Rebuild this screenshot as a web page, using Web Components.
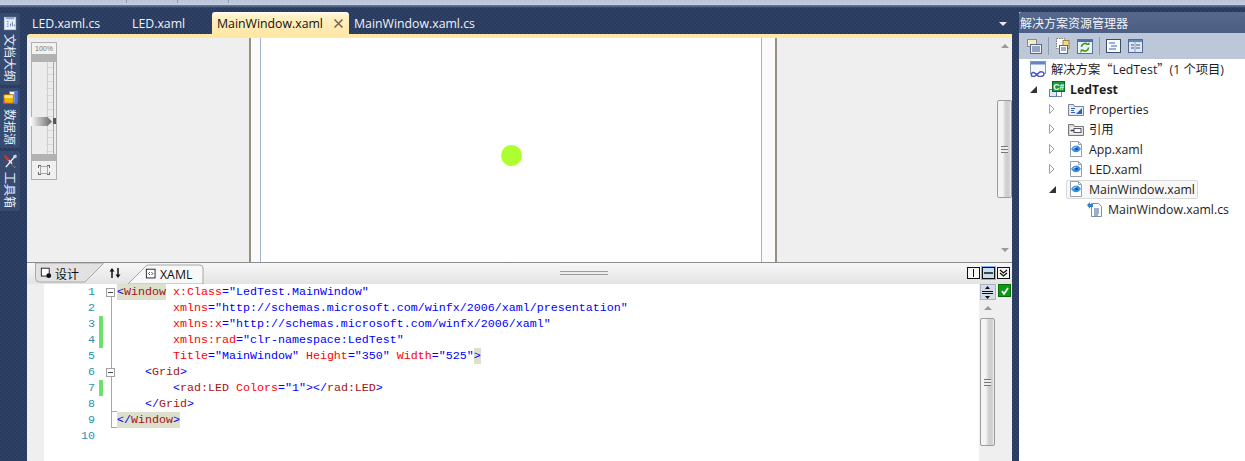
<!DOCTYPE html>
<html>

<head>
    <meta charset="utf-8">
    <style>
        html, body { margin: 0; height: 461px; overflow: hidden; background: #2b3c5c; }
    </style>
</head>

<body>

    <vs-shell>
        <vs-side-tab slot="side" icon="outline" style="height:72px">文档大纲</vs-side-tab>
        <vs-side-tab slot="side" icon="data" style="height:60px">数据源</vs-side-tab>
        <vs-side-tab slot="side" icon="tools" style="height:60px">工具箱</vs-side-tab>

        <vs-tab slot="tabs" style="width:100px">LED.xaml.cs</vs-tab>
        <vs-tab slot="tabs" style="width:85px">LED.xaml</vs-tab>
        <vs-tab slot="tabs" active style="width:137px">MainWindow.xaml</vs-tab>
        <vs-tab slot="tabs">MainWindow.xaml.cs</vs-tab>

        <vs-designer slot="designer"></vs-designer>
        <vs-split-bar slot="split"></vs-split-bar>
        <vs-code slot="code"></vs-code>
        <vs-explorer slot="explorer"></vs-explorer>
    </vs-shell>

    <script>
        const UI_FONT = '"Open Sans", "Noto Sans CJK SC", sans-serif';

        // 所有小图标都放在这里，viewBox 都是 16x16
        const ICONS = {
            outline: '<rect x="1.5" y="1.5" width="12" height="13" fill="#eef2f8" stroke="#c5d0e4"/><rect x="3" y="1" width="9" height="2.5" fill="#8fa6cf"/><path d="M4 6h2M4 8.5h2M4 11h2M8 11V8M10 11V6M12 11V9" stroke="#5d7fb8"/>',
            data: '<rect x="7" y="0.5" width="8" height="12" fill="#f4f6fb" stroke="#6a86d8"/><rect x="12" y="1" width="3" height="13" fill="#4f74e0"/><rect x="1" y="4" width="10" height="9" fill="#f4b400" stroke="#a87400"/><rect x="1.5" y="4.5" width="9" height="3" fill="#ffe680"/><rect x="0" y="11" width="2" height="2" fill="#e040c0"/>',
            tools: '<path d="M2 2l11 12" stroke="#d8dde8" stroke-width="1.6"/><path d="M1.5 1.5l5 5" stroke="#d02020" stroke-width="2"/><path d="M14 1L3 14" stroke="#e8ecf4" stroke-width="1.6"/><path d="M11 1.5c2-1 4 .5 3.5 2.5l-2.5.5-1-1z" fill="#c8d0dc"/><path d="M9 11l3 3 2-1-3-4z" fill="#4a4a4a"/>',
            design: '<rect x="1.500" y="2.500" width="9" height="9" fill="#fff" stroke="#111"/><circle cx="10" cy="11" r="2.800" fill="#111"/>',
            xaml: '<rect x="1.500" y="2.500" width="10" height="10" fill="#fff" stroke="#111"/><path d="M5.500 6L4 7.500 5.500 9M7.500 6L9 7.500 7.500 9" fill="none" stroke="#111"/>',
            solution: '<rect x="0.5" y="0.5" width="15" height="12" fill="#f6f8fc" stroke="#8a97ad"/><rect x="1" y="1" width="14" height="2.500" fill="#5f86c8"/><path d="M3 15.500c-2 0-2.500-3.500 0-4s4 4 6.500 4 4.500-1 4.500-2.500-2-3-4-2-3.500 4.500-7 4.500z" fill="#fff" stroke="#4a58c8" stroke-width="1.500"/>',
            project: '<rect x="3.500" y="6.500" width="9" height="9" fill="#fff" stroke="#7a8aa8"/><rect x="0.500" y="8.500" width="7" height="7" fill="#dfe8f6" stroke="#6080b0"/><rect x="3.500" y="0.500" width="12" height="10" fill="#1f9a3a" stroke="#0e6a22"/><text x="4.300" y="8.800" font-size="8.500" font-weight="700" font-family="Liberation Sans" fill="#fff">C#</text>',
            props: '<path d="M0.500 3.500h5l1 2h9v9H0.500z" fill="#dde3ee" stroke="#7a8598"/><rect x="2" y="6" width="12.500" height="7.500" fill="#eef2f9"/><path d="M3 7.500h4M3 9.500h3M3 11.500h4" stroke="#3060c0"/><path d="M8 13l6-6v6z" fill="#2a5fd0"/>',
            refs: '<path d="M0.500 3.500h5l1 2h9v9H0.500z" fill="#d8d8d8" stroke="#777"/><rect x="2" y="6" width="12.500" height="7.500" fill="#efefef"/><rect x="6" y="7.500" width="7" height="4" fill="#fff" stroke="#556"/><path d="M2.500 9.500H6" stroke="#445" stroke-width="1.500"/>',
            xamlfile: '<path d="M2.500 0.500h8l3 3v12h-11z" fill="#fff" stroke="#96a0ae"/><path d="M10.500 0.500v3h3" fill="none" stroke="#96a0ae"/><path d="M3 8c1.500-2.500 3.500-3.500 5.500-3.500S11.500 6 13 8c-1.500 2-3 3.300-5 3.300S4.500 10 3 8z" fill="#3b8ee0"/><path d="M5 8c.8-1.300 2-2 3.300-2" stroke="#cfe6ff" fill="none"/><circle cx="8.500" cy="8" r="1.300" fill="#0f4f9e"/>',
            csfile: '<path d="M4.500 2.500h7l3 3v10h-10z" fill="#fff" stroke="#7f8da3"/><path d="M7 8h5M7 10h5M7 12h5M7 14h4" stroke="#3b5f95"/><path d="M0 4l3-3v2h3v3H3v2z" fill="#2f7fd8"/>',
            tbProps: '<rect x="1.500" y="1.500" width="9" height="7" fill="#f4ecc8" stroke="#8f8a70"/><rect x="4.500" y="6.500" width="11" height="9" fill="#eef2f8" stroke="#54688c"/><path d="M6 9h8M6 11h8M6 13h8" stroke="#3b5688"/>',
            tbFiles: '<rect x="1.500" y="0.500" width="8" height="10" fill="#fff" stroke="#777" stroke-dasharray="1.500 1"/><rect x="8" y="2.500" width="6" height="8" fill="#f0d890" stroke="#9a8545"/><rect x="4.500" y="7.500" width="8" height="8" fill="#f7f9fc" stroke="#4d6a9c"/><path d="M6 10h5M6 12h5" stroke="#4d6a9c"/>',
            tbRefresh: '<rect x="0.500" y="1.500" width="15" height="14" fill="#eef3fa" stroke="#5a7198"/><rect x="1" y="2" width="14" height="2" fill="#4f6fa8"/><path d="M4.500 9a3.500 3.500 0 0 1 6-2.500M11.500 9.500a3.500 3.500 0 0 1-6 2.500" fill="none" stroke="#3f9a1e" stroke-width="1.600"/><path d="M9 7h3.500V4zM7 11.500H3.500V15z" fill="#3f9a1e"/>',
            tbCode: '<rect x="0.500" y="1.500" width="14" height="13" fill="#fbfcfe" stroke="#3d4c68"/><path d="M3 5h6M5 8h6M3 11h7" stroke="#2c63c8" stroke-width="1.200"/>',
            tbView: '<rect x="0.500" y="1.500" width="14" height="13" fill="#dfe7f3" stroke="#4f6a98"/><rect x="1" y="2" width="13" height="2" fill="#5f86c8"/><path d="M3 7h3M3 10h3M8 7h4M8 10h4" stroke="#455a80"/><path d="M7 4v10" stroke="#8a9cba"/>'
        };

        // 通用的 shadow 模板写法
        function shadowOf(el, html) {
            const shadow = el.attachShadow({ mode: 'open' });
            shadow.innerHTML = html;
            return shadow;
        }

        class VsIcon extends HTMLElement {
            constructor() {
                super();
                const size = this.getAttribute('size') || 16;
                shadowOf(this, `<style>:host{display:inline-flex;flex:none;width:${size}px;height:${size}px}svg{display:block}</style>
                    <svg width="${size}" height="${size}" viewBox="0 0 16 16">${ICONS[this.getAttribute('name')] || ''}</svg>`);
            }
        }

        class VsShell extends HTMLElement {
            constructor() {
                super();
                shadowOf(this, `<style>
                    :host { display: flex; flex-direction: column; width: 1245px; height: 461px; overflow: hidden;
                        background: repeating-conic-gradient(#2e4168 0 25%, #293a5a 0 50%) 0 0/4px 4px; font-family: ${UI_FONT}; }
                    .top { height: 5px; flex: none; background: linear-gradient(#b9c5da, #c3cde0); display: flex; }
                    .top i { width: 50px; height: 3px; border-right: 1px solid #8e9ab0; flex: none; }
                    .top i:first-child { width: 126px; }
                    .fade { height: 7px; flex: none; background: linear-gradient(#7283a0 0, rgba(46,65,104,0) 3px); }
                    .main { flex: 1; display: flex; min-height: 0; }
                    .side { width: 27px; flex: none; display: flex; flex-direction: column; gap: 3px; padding-top: 1px; box-sizing: border-box; }
                    .well { width: 985px; flex: none; display: flex; flex-direction: column; }
                    .strip { height: 22px; flex: none; display: flex; position: relative; }
                    .arrow { position: absolute; right: 5px; top: 10px; width: 0; height: 0; border: 4px solid transparent; border-top: 4px solid #e4e9f2; border-bottom: 0; border-left-width: 4px; }
                    .gold { height: 4px; flex: none; background: #ffe8a6; border-top-left-radius: 3px; }
                    .doc { flex: 1; display: flex; flex-direction: column; min-height: 0; background: #efefef; }
                    .right { width: 226px; flex: none; margin-left: 7px; display: flex; }
                    ::slotted([slot=designer]) { height: 224px; flex: none; }
                    ::slotted([slot=split]) { height: 22px; flex: none; }
                    ::slotted([slot=code]) { flex: 1; min-height: 0; }
                </style>
                <div class="top"><i></i><i></i><i></i></div>
                <div class="fade"></div>
                <div class="main">
                    <div class="side"><slot name="side"></slot></div>
                    <div class="well">
                        <div class="strip"><slot name="tabs"></slot><span class="arrow"></span></div>
                        <div class="gold"></div>
                        <div class="doc"><slot name="designer"></slot><slot name="split"></slot><slot name="code"></slot></div>
                    </div>
                    <div class="right"><slot name="explorer"></slot></div>
                </div>`);
            }
        }

        class VsSideTab extends HTMLElement {
            constructor() {
                super();
                shadowOf(this, `<style>
                    :host { display: flex; flex-direction: column; align-items: center; width: 20px; box-sizing: border-box; padding-top: 3px; gap: 3px;
                        background: #374a70; border-radius: 0 2px 2px 0; color: #e6ecf8; font-size: 12px; line-height: 14px;
                        font-family: "Noto Sans CJK SC", sans-serif; overflow: hidden; }
                    span { writing-mode: vertical-rl; text-orientation: sideways; white-space: nowrap; }
                </style><vs-icon name="${this.getAttribute('icon')}" size="15"></vs-icon><span><slot></slot></span>`);
            }
        }

        class VsTab extends HTMLElement {
            constructor() {
                super();
                const active = this.hasAttribute('active');
                shadowOf(this, `<style>
                    :host { display: flex; align-items: center; box-sizing: border-box; flex: none; height: 22px; padding-left: 5px;
                        color: ${active ? '#111' : '#eef2f8'}; font-size: 12.3px; white-space: nowrap;
                        ${active ? 'background: linear-gradient(#fffdf2 0, #fff0c4 5px, #ffe8a6 100%); border-radius: 3px 3px 0 0;' : ''} }
                    svg { margin-left: 11px; flex: none; }
                </style><slot></slot>${active ? '<svg width="9" height="9" viewBox="0 0 9 9"><path d="M.5.500l8 8M8.500.500l-8 8" stroke="#75664a" stroke-width="1.500"/></svg>' : ''}`);
            }
        }

        class VsScrollbar extends HTMLElement {
            constructor() {
                super();
                const top = this.getAttribute('top') || 0;
                const len = this.getAttribute('len') || 100;
                const down = this.hasAttribute('nodown') ? '' : '<i class="arr dn"></i>';
                shadowOf(this, `<style>
                    :host { display: flex; flex-direction: column; align-items: center; box-sizing: border-box; width: 15px; flex: none; background: #efefef; position: relative; }
                    .arr { width: 0; height: 0; border: 4px solid transparent; flex: none; }
                    .up { border-bottom: 4px solid #9a9a9a; border-top: 0; margin-top: 6px; }
                    .dn { border-top: 4px solid #9a9a9a; border-bottom: 0; margin-bottom: 10px; }
                    .track { flex: 1; width: 100%; padding-top: ${top}px; box-sizing: border-box; min-height: 0; }
                    .thumb { height: ${len}px; box-sizing: border-box; border: 1px solid #9c9c9c; border-radius: 2px;
                        background: linear-gradient(90deg, #f4f4f4 0 35%, #d0d0d0 60%, #cfcfcf 85%, #eee 100%);
                        display: flex; align-items: center; justify-content: center; }
                    .grip { width: 7px; height: 7px; background: repeating-linear-gradient(#777 0 1px, #eee 1px 3px); }
                </style><i class="arr up"></i><div class="track"><div class="thumb"><div class="grip"></div></div></div>${down}`);
            }
        }

        class VsZoomSlider extends HTMLElement {
            constructor() {
                super();
                shadowOf(this, `<style>
                    :host { position: absolute; left: 4px; top: 4px; width: 26px; height: 138px; box-sizing: border-box; border: 1px solid #b0b0b0; background: #e9e9e9; display: flex; flex-direction: column; }
                    .pct { height: 11px; background: #f2f2f2; font: 7px/11px "Liberation Sans", sans-serif; text-align: center; color: #777; }
                    .band { height: 8px; background: #b2b2b2; flex: none; }
                    .track { flex: 1; position: relative; background: #ececec;
                        background-image: linear-gradient(90deg, transparent 15px, #cfcfcf 15px 16px, transparent 16px 21px, #a8a8a8 21px 22px, transparent 22px); }
                    .ticks { position: absolute; right: 3px; top: 5px; bottom: 2px; width: 7px; background: repeating-linear-gradient(#d8d8d8 0 1px, transparent 1px 7px); }
                    .thumb { position: absolute; left: -2px; top: 55px; width: 22px; height: 9px; background: linear-gradient(90deg, #fff, #aaa 55%, #666); clip-path: polygon(0 0, 80% 0, 100% 50%, 80% 100%, 0 100%); }
                    .knob { position: absolute; left: 21px; top: 56px; width: 3px; height: 6px; background: #555; }
                    .fit { height: 18px; flex: none; background: #f0f0f0; display: flex; align-items: center; justify-content: center; }
                </style>
                <div class="pct">100%</div><div class="band"></div>
                <div class="track"><div class="ticks"></div><div class="thumb"></div><div class="knob"></div></div>
                <div class="band" style="height:7px"></div>
                <div class="fit"><svg width="12" height="10" viewBox="0 0 12 10"><path d="M2.500 2v6M9.500 2v6M2 1.500h8M2 8.500h8" stroke="#a8a8a8" fill="none"/><path d="M0 0h3v1H1v2H0zM12 0H9v1h2v2h1zM0 10h3V9H1V7H0zM12 10H9V9h2V7h1z" fill="#666"/></svg></div>`);
            }
        }

        class VsDesigner extends HTMLElement {
            constructor() {
                super();
                shadowOf(this, `<style>
                    :host { display: flex; background: #efefef; position: relative; overflow: hidden; }
                    .canvas { flex: 1; display: flex; padding-left: 222px; }
                    .board { width: 528px; box-sizing: border-box; display: flex; background: #fafafa;
                        border-left: 2px solid #96907f; border-right: 2px solid #96907f; padding: 0 13px 0 9px; }
                    .win { flex: 1; background: #fff; border-left: 1px solid #a3b5cc; border-right: 1px solid #a3b5cc; display: flex; align-items: center; justify-content: center; padding-top: 10px; }
                    .ball { width: 21px; height: 21px; border-radius: 50%; background: #adff2f; }
                </style>
                <div class="canvas"><div class="board"><div class="win"><div class="ball"></div></div></div></div>
                <vs-zoom-slider></vs-zoom-slider>
                <vs-scrollbar top="52" len="98"></vs-scrollbar>`);
            }
        }

        class VsSplitBar extends HTMLElement {
            constructor() {
                super();
                shadowOf(this, `<style>
                    :host { display: flex; align-items: flex-end; box-sizing: border-box; border-top: 1px solid #8c8c8c; position: relative;
                        background: linear-gradient(#f7f7f7, #e3e3e3); font: 12px "Noto Sans CJK SC", sans-serif; color: #111; padding-left: 8px; }
                    .tab { position: relative; display: flex; align-items: center; box-sizing: border-box; flex: none; height: 20px; }
                    .tab svg.bg { position: absolute; left: 0; top: 0; }
                    .tab > span, .tab > vs-icon { position: relative; }
                    .t1 { width: 69px; padding-left: 5px; gap: 1px; margin-bottom: 1px; }
                    .sw { width: 24px; margin-bottom: 1px; padding-left: 5px; }
                    .t2 { width: 76px; padding-left: 17px; }
                    .t2 span { font: 12.3px ${UI_FONT}; margin-left: 1px; }
                    .grip { position: absolute; left: 533px; top: 8px; width: 48px; height: 2px; border-top: 1px solid #9c9c9c; border-bottom: 1px solid #9c9c9c; }
                    .btns { position: absolute; right: 2px; top: 4px; display: flex; gap: 2px; }
                    .btns b { display: flex; align-items: center; justify-content: center; width: 11px; height: 10px; border: 1px solid #111; background: #f6f6f6; }
                    .btns b.on { background: #c9ddf6; outline: 1px solid #7fb2ee; }
                </style>
                <div class="tab t1"><svg class="bg" width="69" height="20" viewBox="0 0 69 20"><path d="M.5 0v15q0 4 4 4H50L68 1V0z" fill="#e2e2e2" stroke="#a8a8a8"/></svg><vs-icon name="design" size="14"></vs-icon><span>设计</span></div>
                <div class="tab sw"><svg width="12" height="10" viewBox="0 0 12 10"><path d="M3 1v9M9 0v9" stroke="#111" stroke-width="1.500" fill="none"/><path d="M3 0L.5 3.500h5zM9 10l-2.500-3.500h5z" fill="#111"/></svg></div>
                <div class="tab t2"><svg class="bg" width="76" height="20" viewBox="0 0 76 20"><path d="M0 20L18 2q1-1 3-1H72q3 0 3 3V20z" fill="#f8f8f8" stroke="#a8a8a8"/></svg><vs-icon name="xaml" size="14"></vs-icon><span>XAML</span></div>
                <div class="grip"></div>
                <div class="btns">
                    <b><svg width="9" height="8"><path d="M4.500 0v8" stroke="#111"/></svg></b>
                    <b class="on"><svg width="9" height="8"><path d="M0 4h9" stroke="#111" stroke-width="1.500"/></svg></b>
                    <b><svg width="9" height="8"><path d="M1 1l3.500 3L8 1M1 4l3.500 3L8 4" fill="none" stroke="#111" stroke-width="1.300"/></svg></b>
                </div>`);
            }
        }

        // 一行代码: [是否修改, 折叠标记, 内容html]
        const T = s => `<u>${s}</u>`;      // 标点 蓝色
        const N = s => `<b>${s}</b>`;      // 标签名 深红
        const A = s => `<s>${s}</s>`;      // 属性名 红色
        const LINES = [
            [0, 'open first', `<em>${T('&lt;')}${N('Window')}</em> ${A('x:Class')}${T('="LedTest.MainWindow"')}`],
            [0, 'mid', `        ${A('xmlns')}${T('="http://schemas.microsoft.com/winfx/2006/xaml/presentation"')}`],
            [1, 'mid', `        ${A('xmlns:x')}${T('="http://schemas.microsoft.com/winfx/2006/xaml"')}`],
            [1, 'mid', `        ${A('xmlns:rad')}${T('="clr-namespace:LedTest"')}`],
            [0, 'mid', `        ${A('Title')}${T('="MainWindow"')} ${A('Height')}${T('="350"')} ${A('Width')}${T('="525"')}<em>${T('&gt;')}</em>`],
            [0, 'open', `    ${T('&lt;')}${N('Grid')}${T('&gt;')}`],
            [1, 'mid', `        ${T('&lt;')}${N('rad:LED')} ${A('Colors')}${T('="1"&gt;&lt;/')}${N('rad:LED')}${T('&gt;')}`],
            [0, 'end', `    ${T('&lt;/')}${N('Grid')}${T('&gt;')}`],
            [0, 'end', `<em>${T('&lt;/')}${N('Window')}${T('&gt;')}</em>`],
            [0, 'none', ``]
        ];

        class VsCode extends HTMLElement {
            constructor() {
                super();
                const rows = LINES.map((l, i) => `
                    <div class="ln">${i + 1}</div>
                    <div class="chg ${l[0] ? 'on' : ''}"></div>
                    <div class="fold ${l[1]}">${l[1].startsWith('open') ? '<i></i>' : ''}</div>
                    <pre>${l[2]}</pre>`).join('');
                shadowOf(this, `<style>
                    :host { display: flex; background: #efefef; overflow: hidden; }
                    .glyph { width: 17px; flex: none; }
                    .edit { flex: 1; background: #fff; min-width: 0; }
                    .grid { display: grid; grid-template-columns: 55px 4px 3px 11px 1fr; grid-auto-rows: 16px; }
                    .ln { color: #2b91af; text-align: right; padding-right: 4px; font: 11.67px/16px "Liberation Mono", monospace; }
                    .chg.on { background: #6ce26c; }
                    .fold { grid-column: 4; position: relative; }
                    .fold::before { content: ""; position: absolute; left: 5px; top: 0; bottom: 0; border-left: 1px solid #a8a8a8; }
                    .fold.none::before { display: none; }
                    .fold.first::before { top: 6px; }
                    .fold.end::after { content: ""; position: absolute; left: 5px; right: 0; bottom: 0; border-top: 1px solid #a8a8a8; }
                    .fold i { position: absolute; left: 0; top: 4px; width: 7px; height: 7px; border: 1px solid #a0a0a0; background: #fff;
                        background-image: linear-gradient(#444, #444); background-size: 5px 1px; background-position: center; background-repeat: no-repeat; }
                    pre { grid-column: 5; margin: 0; font: 11.67px/16px "Liberation Mono", monospace; white-space: pre; }
                    u { color: #0000ff; text-decoration: none; }
                    b { color: #a31515; font-weight: 400; }
                    s { color: #ff0000; text-decoration: none; }
                    em { font-style: normal; display: inline-block; background: #dde0cc; }
                    .vbar { width: 17px; flex: none; display: flex; flex-direction: column; align-items: center; background: #efefef; }
                    .split { width: 16px; height: 16px; box-sizing: border-box; background: #d5dce8; border: 1px solid #a9b2c2; flex: none; display: flex; align-items: center; justify-content: center; }
                    vs-scrollbar { flex: 1; min-height: 0; }
                    .ok { width: 16px; flex: none; padding: 0 1px 0 2px; box-sizing: border-box; }
                    .ok div { width: 13px; height: 13px; background: #0c9a14; border: 1px solid #076d0c; box-sizing: border-box; display: flex; align-items: center; justify-content: center; }
                </style>
                <div class="glyph"></div>
                <div class="edit"><div class="grid">${rows}</div></div>
                <div class="vbar">
                    <div class="split"><svg width="11" height="13" viewBox="0 0 11 13"><path d="M0 5.500h11M0 7.500h11" stroke="#111"/><path d="M5.500 0L3 3h5zM5.500 13L3 10h5z" fill="#111"/></svg></div>
                    <vs-scrollbar top="8" len="128" nodown></vs-scrollbar>
                </div>
                <div class="ok"><div><svg width="8" height="8" viewBox="0 0 8 8"><path d="M1 4l2 3 4-6" fill="none" stroke="#fff" stroke-width="1.700"/></svg></div></div>`);
            }
        }

        class VsTreeRow extends HTMLElement {
            constructor() {
                super();
                const level = +this.getAttribute('level');
                const exp = this.getAttribute('exp');
                const selected = this.hasAttribute('selected');
                let arrow = '';
                if (exp === 'closed') arrow = '<svg width="6" height="10" viewBox="0 0 6 10"><path d="M.5.500l4.500 4.500-4.500 4.500z" fill="#fff" stroke="#a0a0a0"/></svg>';
                if (exp === 'open') arrow = '<svg width="7" height="7" viewBox="0 0 7 7"><path d="M7 0v7H0z" fill="#333"/></svg>';
                shadowOf(this, `<style>
                    :host { display: flex; align-items: center; height: 20px; box-sizing: border-box; padding-left: ${level ? 11 + 19 * (level - 1) : 11}px;
                        color: #1e1e1e; font-size: 12.3px; white-space: nowrap; position: relative; }
                    .arr { width: 19px; flex: none; display: flex; justify-content: flex-start; box-sizing: border-box; }
                    .txt { margin-left: 5px; position: relative; }
                    .sel { position: absolute; left: 47px; top: 1px; width: 132px; height: 19px; box-sizing: border-box; border: 1px solid #d9d9d9; border-radius: 2px; background: #f8f8f8; }
                    vs-icon { position: relative; }
                    :host([bold]) { font-weight: 700; }
                </style>${selected ? '<div class="sel"></div>' : ''}${level ? `<div class="arr">${arrow}</div>` : ''}<vs-icon name="${this.getAttribute('icon')}"></vs-icon><span class="txt"><slot></slot></span>`);
            }
        }

        class VsExplorer extends HTMLElement {
            constructor() {
                super();
                shadowOf(this, `<style>
                    :host { display: flex; flex-direction: column; flex: 1; min-width: 0; background: #fff; font-family: ${UI_FONT}; }
                    .title { height: 21px; flex: none; display: flex; align-items: center; padding-left: 1px; color: #f2f5fa; font: 12px "Noto Sans CJK SC", sans-serif;
                        background: linear-gradient(#56688c, #4b5e83); border-radius: 2px 0 0 0; }
                    .tools { height: 26px; flex: none; background: #bcc7d8; display: flex; align-items: center; padding-left: 7px; }
                    .tools vs-icon { margin-right: 6px; }
                    .tools i { width: 1px; height: 18px; background: #8e9bb0; margin: 0 6px 0 0; }
                    .cjk { font-family: "Noto Sans CJK SC", sans-serif; }
                </style>
                <div class="title">解决方案资源管理器</div>
                <div class="tools">
                    <vs-icon name="tbProps"></vs-icon><i></i><vs-icon name="tbFiles"></vs-icon><vs-icon name="tbRefresh"></vs-icon><i></i><vs-icon name="tbCode"></vs-icon><vs-icon name="tbView"></vs-icon>
                </div>
                <div class="tree">
                    <vs-tree-row level="0" icon="solution"><span class="cjk">解决方案“</span>LedTest<span class="cjk">”</span>(1 个项目)</vs-tree-row>
                    <vs-tree-row level="1" icon="project" exp="open" bold>LedTest</vs-tree-row>
                    <vs-tree-row level="2" icon="props" exp="closed">Properties</vs-tree-row>
                    <vs-tree-row level="2" icon="refs" exp="closed">引用</vs-tree-row>
                    <vs-tree-row level="2" icon="xamlfile" exp="closed">App.xaml</vs-tree-row>
                    <vs-tree-row level="2" icon="xamlfile" exp="closed">LED.xaml</vs-tree-row>
                    <vs-tree-row level="2" icon="xamlfile" exp="open" selected>MainWindow.xaml</vs-tree-row>
                    <vs-tree-row level="3" icon="csfile">MainWindow.xaml.cs</vs-tree-row>
                </div>`);
            }
        }

        customElements.define('vs-icon', VsIcon);
        customElements.define('vs-shell', VsShell);
        customElements.define('vs-side-tab', VsSideTab);
        customElements.define('vs-tab', VsTab);
        customElements.define('vs-scrollbar', VsScrollbar);
        customElements.define('vs-zoom-slider', VsZoomSlider);
        customElements.define('vs-designer', VsDesigner);
        customElements.define('vs-split-bar', VsSplitBar);
        customElements.define('vs-code', VsCode);
        customElements.define('vs-tree-row', VsTreeRow);
        customElements.define('vs-explorer', VsExplorer);
    </script>

</body>

</html>
